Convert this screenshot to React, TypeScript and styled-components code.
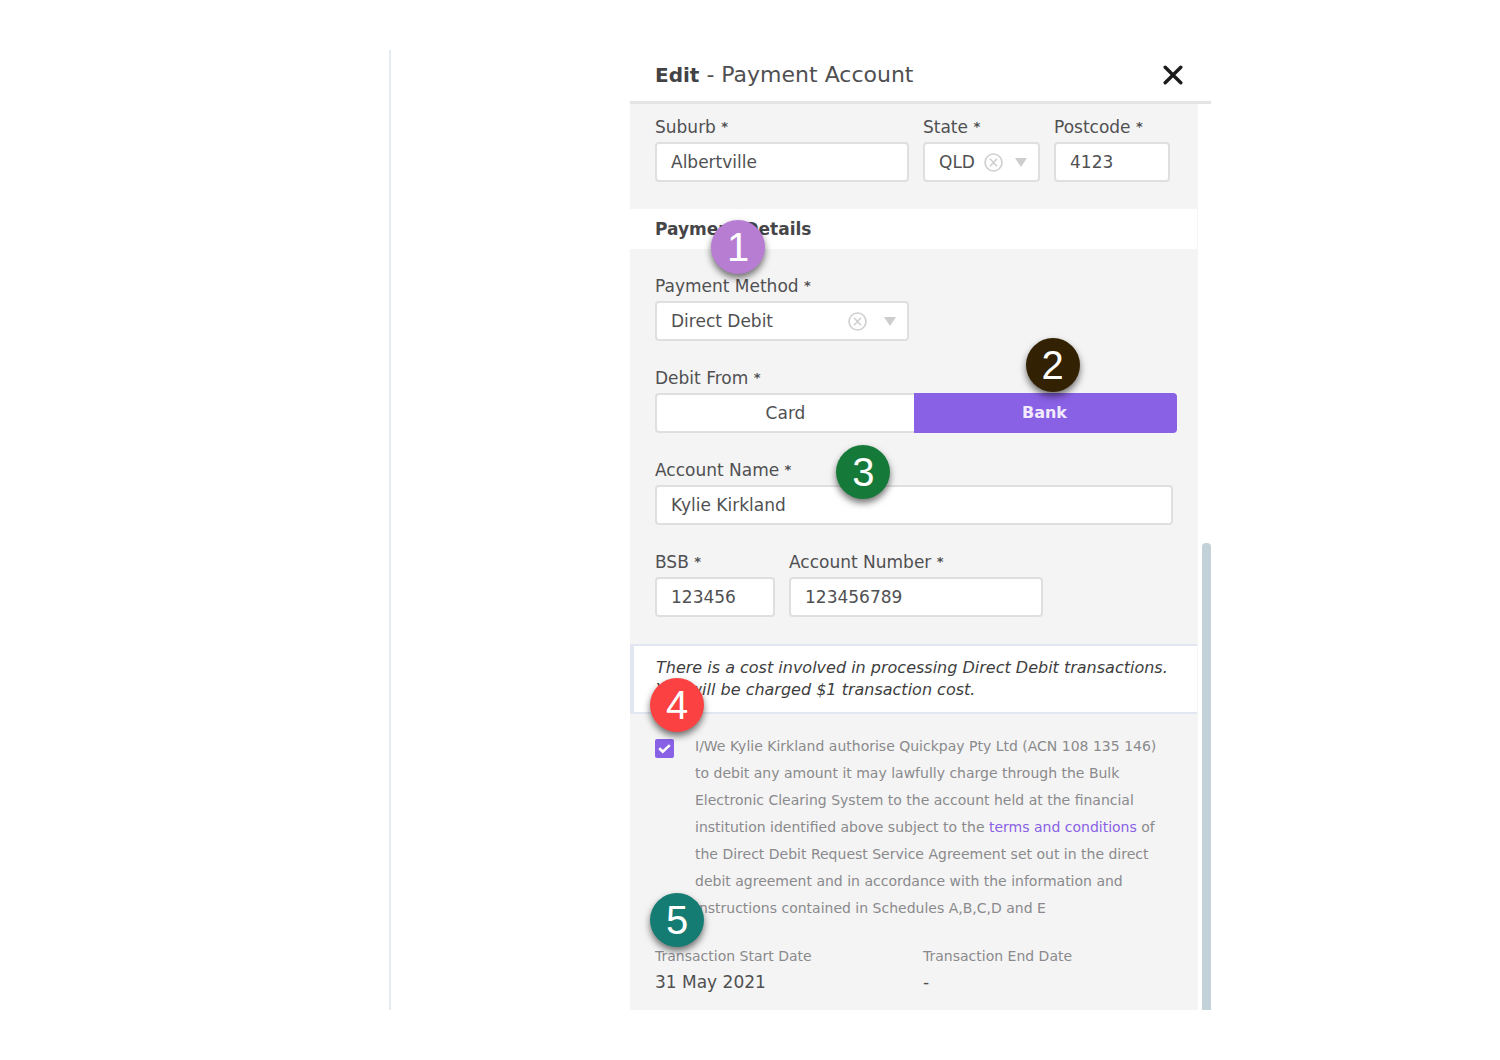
import React, { useState } from "react";
import styled, { createGlobalStyle } from "styled-components";

const GlobalStyle = createGlobalStyle`
  *, *::before, *::after { box-sizing: border-box; }
  body {
    margin: 0;
    background: #fff;
    color: #505052;
    font-family: "DejaVu Sans", Verdana, sans-serif;
    font-size: 17px;
    line-height: 20px;
  }
  button, input, select { font: inherit; color: inherit; margin: 0; }
`;

const Page = styled.main`
  display: grid;
  grid-template-columns: 26% 16% minmax(0, 581px);
  padding: 50px 0;
`;

const Backdrop = styled.div`
  grid-column: 2;
  margin-left: -1px;
  border-left: 2px solid #e6ebef;
`;

const Panel = styled.section`
  min-width: 0;
`;

const Header = styled.header`
  display: flex;
  align-items: center;
  justify-content: space-between;
  height: 54px;
  padding: 0 25px 2px;
  border-bottom: 3px solid #e4e4e5;
`;

const Title = styled.h1`
  margin: 0;
  font-size: 22px;
  line-height: 28px;
  font-weight: 400;
`;

const TitleStrong = styled.strong`
  font-size: 20px;
  color: #434345;
`;

const CloseButton = styled.button`
  display: grid;
  place-items: center;
  width: 26px;
  height: 26px;
  padding: 0;
  border: 0;
  background: none;
`;

const Body = styled.div`
  display: flex;
`;

const Form = styled.form`
  flex: 1;
  min-width: 0;
  background: #f4f4f4;
`;

const ScrollTrack = styled.div`
  display: flex;
  align-items: flex-end;
  width: 13px;
  padding-left: 4px;
`;

const ScrollThumb = styled.div`
  width: 9px;
  height: 467px;
  border-radius: 4px 4px 0 0;
  background: #c3d2d8;
`;

const Section = styled.div<{ $top: number }>`
  display: flex;
  flex-direction: column;
  gap: 27px;
  padding: ${(p) => p.$top}px 21px 27px 25px;
`;

const FieldRow = styled.div<{ $columns: string; $inset?: number }>`
  display: grid;
  grid-template-columns: ${(p) => p.$columns};
  gap: 14px;
  padding-right: ${(p) => p.$inset ?? 0}px;
`;

const Field = styled.div`
  position: relative;
  display: flex;
  flex-direction: column;
  gap: 5px;
  min-width: 0;
`;

const Label = styled.label`
  white-space: nowrap;
`;

const GroupLabel = styled.span`
  white-space: nowrap;
`;

const Star = styled.span`
  font-size: 13px;
  font-weight: 700;
  line-height: 0;
  vertical-align: 2px;
`;

const TextInput = styled.input`
  width: 100%;
  height: 40px;
  padding: 0 14px;
  border: 2px solid #dfdfe0;
  border-radius: 4px;
  background: #fff;
`;

const SelectBox = styled.div`
  position: relative;
`;

const Select = styled.select`
  appearance: none;
  display: block;
  width: 100%;
  height: 40px;
  padding: 0 14px;
  border: 2px solid #dfdfe0;
  border-radius: 4px;
  background: #fff;
`;

const SelectTools = styled.div<{ $gap: number }>`
  position: absolute;
  top: 0;
  right: 13px;
  height: 100%;
  display: flex;
  align-items: center;
  gap: ${(p) => p.$gap}px;
  pointer-events: none;
`;

const ClearButton = styled.button`
  display: flex;
  padding: 0;
  border: 0;
  background: none;
  pointer-events: auto;
`;

const Toggle = styled.div`
  display: grid;
  grid-template-columns: 259fr 263fr;
  height: 40px;
`;

const ToggleButton = styled.button<{ $side: "left" | "right" }>`
  padding: 0;
  border: 2px solid #dfdfe0;
  border-radius: ${(p) => (p.$side === "left" ? "4px 0 0 4px" : "0 4px 4px 0")};
  border-${(p) => (p.$side === "left" ? "right" : "left")}: 0;
  background: #fff;

  &[aria-pressed="true"] {
    border-color: #8961e5;
    background: #8961e5;
    color: #f1ebfd;
    font-size: 16px;
    font-weight: 700;
  }
`;

const SectionTitle = styled.h2`
  position: relative;
  margin: 0 1px 0 0;
  padding: 10px 25px;
  background: #fff;
  color: #464648;
  font-size: 17px;
  line-height: 20px;
`;

const Notice = styled.p`
  position: relative;
  margin: 0 1px 0 0;
  padding: 11px 22px;
  border: solid #e1e6f1;
  border-width: 2px 0 2px 4px;
  background: #fff;
  color: #3e3e40;
  font-size: 16px;
  line-height: 22px;
  font-style: italic;
  white-space: nowrap;
`;

const Consent = styled.div`
  display: flex;
  gap: 21px;
  padding: 19px 25px 24px;
  color: #8a8a8c;
  font-size: 14px;
  line-height: 27px;
`;

const CheckBox = styled.span`
  position: relative;
  display: flex;
  flex: none;
  width: 19px;
  height: 19px;
  margin-top: 6px;
`;

const CheckInput = styled.input`
  appearance: none;
  width: 19px;
  height: 19px;
  border: 2px solid #8961e5;
  border-radius: 2px;
  background: #fff;

  &:checked { background: #8961e5; }
`;

const CheckMark = styled.svg`
  position: absolute;
  inset: 0;
  pointer-events: none;
`;

const ConsentText = styled.label`
  white-space: nowrap;
`;

const Link = styled.a`
  color: #8961e5;
  text-decoration: none;
`;

const Dates = styled.dl`
  position: relative;
  display: grid;
  grid-template-columns: 254fr 250fr;
  gap: 14px;
  margin: 0;
  padding: 0 25px 18px;
`;

const DateItem = styled.div`
  display: flex;
  flex-direction: column;
  gap: 6px;
`;

const DateName = styled.dt`
  color: #8a8a8c;
  font-size: 14px;
`;

const DateValue = styled.dd`
  margin: 0;
`;

const Badge = styled.span<{ $color: string; $left: string; $top: number }>`
  position: absolute;
  z-index: 1;
  left: ${(p) => p.$left};
  top: ${(p) => p.$top}px;
  display: grid;
  place-items: center;
  width: 54px;
  height: 54px;
  border-radius: 50%;
  background: ${(p) => p.$color};
  box-shadow: 0 4px 7px rgba(0, 0, 0, 0.55);
  color: #fff;
  font: normal 400 40px/54px "Liberation Sans", Arial, sans-serif;
`;

function SelectIcons({ gap, name }: { gap: number; name: string }) {
  return (
    <SelectTools $gap={gap}>
      <ClearButton type="button" aria-label={`Clear ${name}`}>
        <svg width="19" height="19" viewBox="0 0 19 19" fill="none" stroke="#cfcfd0">
          <circle cx="9.5" cy="9.5" r="8.5" strokeWidth="1.6" />
          <path d="M6 5.7l7 7.6M13 5.7l-7 7.6" strokeWidth="1.6" />
        </svg>
      </ClearButton>
      <svg width="12" height="9" viewBox="0 0 12 9" fill="#cdcdce">
        <path d="M0 0h12L6 9z" />
      </svg>
    </SelectTools>
  );
}

function LabelText({ children }: { children: string }) {
  return (
    <>
      {children} <Star>*</Star>
    </>
  );
}

export default function App() {
  const [source, setSource] = useState("Bank");

  return (
    <>
      <GlobalStyle />
      <Page>
        <Backdrop />
        <Panel>
          <Header>
            <Title>
              <TitleStrong>Edit</TitleStrong> - Payment Account
            </Title>
            <CloseButton type="button" aria-label="Close">
              <svg width="20" height="20" viewBox="0 0 20 20" stroke="#1c1c1c" strokeWidth="3.4" strokeLinecap="round">
                <path d="M2.2 2.2l15.6 15.6M17.8 2.2l-15.6 15.6" />
              </svg>
            </CloseButton>
          </Header>
          <Body>
            <Form>
              <Section $top={13}>
                <FieldRow $columns="254fr 117fr 116fr" $inset={7}>
                  <Field>
                    <Label htmlFor="suburb"><LabelText>Suburb</LabelText></Label>
                    <TextInput id="suburb" defaultValue="Albertville" />
                  </Field>
                  <Field>
                    <Label htmlFor="state"><LabelText>State</LabelText></Label>
                    <SelectBox>
                      <Select id="state"><option>QLD</option></Select>
                      <SelectIcons gap={12} name="state" />
                    </SelectBox>
                  </Field>
                  <Field>
                    <Label htmlFor="postcode"><LabelText>Postcode</LabelText></Label>
                    <TextInput id="postcode" defaultValue="4123" />
                  </Field>
                </FieldRow>
              </Section>

              <SectionTitle>
                Payment Details
                <Badge $color="#b67dd3" $left="81px" $top={11}>1</Badge>
              </SectionTitle>

              <Section $top={27}>
                <FieldRow $columns="254fr 254fr">
                  <Field>
                    <Label htmlFor="method"><LabelText>Payment Method</LabelText></Label>
                    <SelectBox>
                      <Select id="method"><option>Direct Debit</option></Select>
                      <SelectIcons gap={17} name="payment method" />
                    </SelectBox>
                  </Field>
                </FieldRow>
                <Field>
                  <GroupLabel id="source"><LabelText>Debit From</LabelText></GroupLabel>
                  <Toggle role="group" aria-labelledby="source">
                    <ToggleButton type="button" $side="left" aria-pressed={source === "Card"} onClick={() => setSource("Card")}>
                      Card
                    </ToggleButton>
                    <ToggleButton type="button" $side="right" aria-pressed={source === "Bank"} onClick={() => setSource("Bank")}>
                      Bank
                    </ToggleButton>
                  </Toggle>
                  <Badge $color="#332103" $left="71%" $top={-30}>2</Badge>
                </Field>
                <FieldRow $columns="1fr" $inset={4}>
                  <Field>
                    <Label htmlFor="account-name"><LabelText>Account Name</LabelText></Label>
                    <TextInput id="account-name" defaultValue="Kylie Kirkland" />
                    <Badge $color="#157a39" $left="35%" $top={-15}>3</Badge>
                  </Field>
                </FieldRow>
                <FieldRow $columns="120fr 254fr 120fr">
                  <Field>
                    <Label htmlFor="bsb"><LabelText>BSB</LabelText></Label>
                    <TextInput id="bsb" defaultValue="123456" />
                  </Field>
                  <Field>
                    <Label htmlFor="account-number"><LabelText>Account Number</LabelText></Label>
                    <TextInput id="account-number" defaultValue="123456789" />
                  </Field>
                </FieldRow>
              </Section>

              <Notice>
                There is a cost involved in processing Direct Debit transactions.
                <br />
                You will be charged $1 transaction cost.
                <Badge $color="#fb4141" $left="16px" $top={32}>4</Badge>
              </Notice>

              <Consent>
                <CheckBox>
                  <CheckInput id="consent" type="checkbox" defaultChecked />
                  <CheckMark viewBox="0 0 19 19" fill="none" stroke="#fff" strokeWidth="2.6">
                    <path d="M4.2 9.2l3.6 3.5 7-6.6" />
                  </CheckMark>
                </CheckBox>
                <ConsentText htmlFor="consent">
                  I/We Kylie Kirkland authorise Quickpay Pty Ltd (ACN 108 135 146)
                  <br />
                  to debit any amount it may lawfully charge through the Bulk
                  <br />
                  Electronic Clearing System to the account held at the financial
                  <br />
                  institution identified above subject to the <Link href="#terms">terms and conditions</Link> of
                  <br />
                  the Direct Debit Request Service Agreement set out in the direct
                  <br />
                  debit agreement and in accordance with the information and
                  <br />
                  instructions contained in Schedules A,B,C,D and E
                </ConsentText>
              </Consent>

              <Dates>
                <DateItem>
                  <DateName>Transaction Start Date</DateName>
                  <DateValue>31 May 2021</DateValue>
                </DateItem>
                <DateItem>
                  <DateName>Transaction End Date</DateName>
                  <DateValue>-</DateValue>
                </DateItem>
                <Badge $color="#157c74" $left="20px" $top={-53}>5</Badge>
              </Dates>
            </Form>
            <ScrollTrack>
              <ScrollThumb />
            </ScrollTrack>
          </Body>
        </Panel>
      </Page>
    </>
  );
}
